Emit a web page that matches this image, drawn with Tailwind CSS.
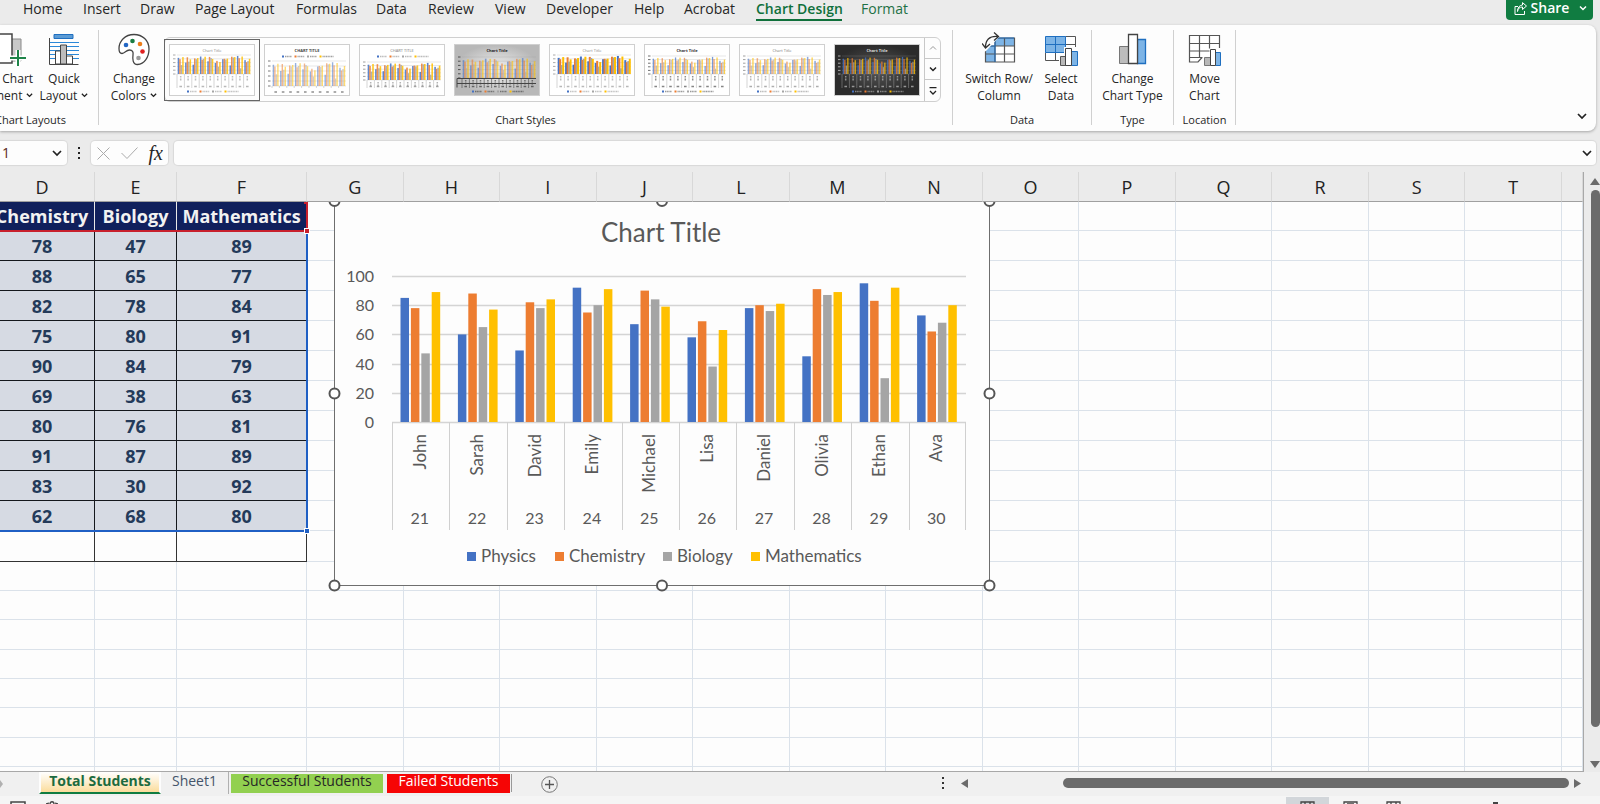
<!DOCTYPE html>
<html lang="en">
<head>
  <meta charset="UTF-8">
  <meta name="viewport" content="width=device-width,initial-scale=1">
  <title>Total Students – Chart Design</title>
  <script src="https://cdn.jsdelivr.net/npm/@tailwindcss/browser@4"></script>
</head>
<body class="flex h-screen flex-col overflow-hidden bg-[#ebebeb] font-['Open_Sans',sans-serif] text-[#262626]">

<!-- ────────── TAB BAR ────────── -->
<header class="flex h-[25px] shrink-0 justify-between pl-[23px] pr-[7px]">
  <nav class="grid grid-cols-[60px_57px_55px_101px_80px_52px_67px_51px_88px_50px_72px_105px_60px] text-sm leading-[18px] whitespace-nowrap">
    <a href="#">Home</a>
    <a href="#">Insert</a>
    <a href="#">Draw</a>
    <a href="#">Page Layout</a>
    <a href="#">Formulas</a>
    <a href="#">Data</a>
    <a href="#">Review</a>
    <a href="#">View</a>
    <a href="#">Developer</a>
    <a href="#">Help</a>
    <a href="#">Acrobat</a>
    <a href="#" class="h-[21px] w-[86px] border-b-2 border-[#0f703b] font-semibold text-[#0f703b]">Chart Design</a>
    <a href="#" class="text-[#1e7145]">Format</a>
  </nav>
  <button class="flex h-5 w-[87px] items-center justify-between rounded-b bg-[#107c41] pb-1 pl-2 pr-1.5 text-sm font-semibold text-white">
    <svg class="size-[13px]" viewBox="0 0 13 13" fill="none" stroke="currentColor"><path d="M4 4.500H1v8h9.500V9M3.500 9.500c.3-3 2-4.500 5-4.500V7.500L12.500 4 8.500 .6V3C5.500 3.200 3.600 5.500 3.500 9.500z"/></svg>
    <span>Share</span>
    <svg class="ml-1.5 size-2" viewBox="0 0 8 8" fill="none" stroke="currentColor" stroke-width="1.500"><path d="M1 2.500 4 5.500 7 2.500"/></svg>
  </button>
</header>

<!-- ────────── RIBBON ────────── -->
<section class="mr-1 flex h-[106px] shrink-0 overflow-hidden rounded-r-lg bg-[#fdfdfd] pt-[5px] pb-1.5 text-xs leading-[17px] shadow-[0_1px_3px_rgba(0,0,0,0.3)]">

  <!-- Chart Layouts -->
  <div class="flex w-[99px] flex-col border-r border-[#d0d0d0]">
    <div class="-ml-[30px] flex flex-1">
      <button class="flex w-[70px] shrink-0 flex-col items-center">
        <svg class="ml-[10px] mt-[3px] mb-1 h-[33px] w-[34px]" viewBox="0 0 34 33" fill="none">
          <path d="M10 6h18v22H10z" fill="#c8c8c8" stroke="#8a8a8a"/>
          <path d="M1 1h18v29H1z" fill="#fff" stroke="#444" stroke-width="1.500"/>
          <path d="M25 17v16M17 25h16" stroke="#fff" stroke-width="5"/>
          <path d="M25 17v16M17 25h16" stroke="#1e8449" stroke-width="2"/>
        </svg>
        <span>Add Chart</span>
        <span class="flex items-center gap-1">Element <svg class="size-[7px]" viewBox="0 0 8 8" fill="none" stroke="#222" stroke-width="1.500"><path d="M1 2 4 5 7 2"/></svg></span>
      </button>
      <button class="flex w-12 shrink-0 flex-col items-center">
        <svg class="mt-[3px] mb-1 h-[33px] w-8" viewBox="0 0 32 33" fill="none">
          <path d="M6 1.500h19v4H6z" fill="#5b9bd5" stroke="#1f6fc0"/>
          <path d="M2 9.500h29M2 13.500h29M2 17.500h29M2 21.500h29M2 25.500h29" stroke="#2b88d8" stroke-width="1.200"/>
          <path d="M7.500 18h5v13h-5zM18.500 23h6v8h-6z" fill="#fff" stroke="#444"/>
          <path d="M12.500 12h6v19h-6z" fill="#bcbcbc" stroke="#444"/>
          <path d="M1.500 5v26.500h29" stroke="#444"/>
        </svg>
        <span>Quick</span>
        <span class="flex items-center gap-1">Layout <svg class="size-[7px]" viewBox="0 0 8 8" fill="none" stroke="#222" stroke-width="1.500"><path d="M1 2 4 5 7 2"/></svg></span>
      </button>
    </div>
    <div class="-ml-[37px] text-center text-[11px] leading-[10px] whitespace-nowrap">Chart Layouts</div>
  </div>

  <!-- Chart Styles -->
  <div class="flex w-[854px] flex-col border-r border-[#d0d0d0]">
    <div class="flex flex-1 items-start pl-[10px]">
      <button class="flex w-[50px] shrink-0 flex-col items-center">
        <svg class="mt-[3px] mb-1 h-[33px] w-8" viewBox="0 0 32 33" fill="none">
          <path d="M16 1.500C7 1.500 1 8 1 15.500c0 3 1 5 3 5 3 0 4-3.500 7.500-3.500 3 0 4 2 3.500 5-.5 3.500-.5 9.500 4.500 9.500C26.500 31 31 24 31 16 31 7.500 24.500 1.500 16 1.500z" fill="#fff" stroke="#444" stroke-width="1.300"/>
          <circle cx="8" cy="12" r="2.300" fill="#2266c4"/><circle cx="14.500" cy="8" r="2.300" fill="#1a7d43"/>
          <circle cx="22" cy="11" r="2.300" fill="#ed7d1a"/><circle cx="24.500" cy="18.500" r="2.300" fill="#e02020"/><circle cx="20.500" cy="25" r="2.300" fill="#9a9a9a"/>
        </svg>
        <span>Change</span>
        <span class="flex items-center gap-1">Colors <svg class="size-[7px]" viewBox="0 0 8 8" fill="none" stroke="#222" stroke-width="1.500"><path d="M1 2 4 5 7 2"/></svg></span>
      </button>
      <div class="ml-[5px] mt-[7px] flex h-[65px] rounded-md border border-[#cfcfcf]">
        <div id="gallery" class="flex items-center gap-[9px] px-1"></div>
        <div class="grid w-4 grid-rows-3 divide-y divide-[#c8c8c8] border-l border-[#c8c8c8]">
          <button class="grid place-items-center" aria-label="Row up"><svg class="size-2" viewBox="0 0 8 8" fill="none" stroke="#999"><path d="M1 5.500 4 2.500 7 5.500"/></svg></button>
          <button class="grid place-items-center" aria-label="Row down"><svg class="size-2" viewBox="0 0 8 8" fill="none" stroke="#222" stroke-width="1.500"><path d="M1 2.500 4 5.500 7 2.500"/></svg></button>
          <button class="grid place-items-center" aria-label="More styles"><svg class="size-2" viewBox="0 0 8 8" fill="none" stroke="#222" stroke-width="1.300"><path d="M.5 .7h7M1 4 4 7 7 4"/></svg></button>
        </div>
      </div>
    </div>
    <div class="text-center text-[11px] leading-[10px]">Chart Styles</div>
  </div>

  <!-- Data -->
  <div class="flex w-[139px] flex-col border-r border-[#d0d0d0]">
    <div class="flex flex-1 pl-2">
      <button class="flex w-[76px] flex-col items-center">
        <svg class="mt-[1px] mb-1 h-[35px] w-[34px]" viewBox="0 0 34 35" fill="none">
          <path d="M3.500 7h29v24h-29z" fill="#fff"/>
          <path d="M13 7h19.500v8H13zM3.500 15H13v16H3.500z" fill="#7db4e6"/>
          <path d="M3.500 31V7h29v24zM3.500 15h29M3.500 23h29M13 7v24M22.500 7v24" stroke="#555" stroke-width="1.200"/>
          <path d="M13 15V7h19M3.500 15H13v16" stroke="#1f6fc0"/>
          <path d="M-1-1h19v6L4 20l-5 2z" fill="#fdfdfd"/>
          <path d="M3.500 16.500C3.500 9 7 5 15.500 5.500M12 1.500l4.500 4-4.500 4M0 12.500l3.500 4.500 4.500-4" stroke="#333" stroke-width="1.300"/>
        </svg>
        <span>Switch Row/</span>
        <span>Column</span>
      </button>
      <button class="flex w-12 flex-col items-center">
        <svg class="mt-[5px] mb-0.5 h-[33px] w-[34px]" viewBox="0 0 34 33" fill="none">
          <path d="M1.500 1.500h30v24h-30z" fill="#fff"/>
          <path d="M1.500 1.500h20v16h-20z" fill="#7db4e6"/>
          <path d="M21.500 1.500h10v24h-30v-8M21.500 9.500h10M21.500 17.500h10M11.500 17.500v8" stroke="#555"/>
          <path d="M1.500 1.500h20v16h-20zM1.500 9.500h20M11.500 1.500v16" stroke="#1f6fc0"/>
          <path d="M15 20h5v-8h14v21H15z" fill="#fdfdfd"/>
          <path d="M16.500 21.500h6v9h-6z" fill="#b8b8b8" stroke="#555"/>
          <path d="M27.500 16.500h6v14h-6z" fill="#7db4e6" stroke="#1f6fc0"/>
          <path d="M21.500 13.500h6v17h-6z" fill="#fff" stroke="#444"/>
        </svg>
        <span>Select</span>
        <span>Data</span>
      </button>
    </div>
    <div class="text-center text-[11px] leading-[10px]">Data</div>
  </div>

  <!-- Type -->
  <div class="flex w-[82px] flex-col border-r border-[#d0d0d0]">
    <button class="flex flex-1 flex-col items-center">
      <svg class="mt-[3px] mb-1 h-[33px] w-[30px]" viewBox="0 0 30 33" fill="none">
        <path d="M1.500 13.500h9v17h-9z" fill="#bcbcbc" stroke="#777"/>
        <path d="M19.500 6.500h8v24h-8z" fill="#7db4e6" stroke="#1f6fc0" stroke-width="1.300"/>
        <path d="M10.500 1.500h9v29h-9z" fill="#fff" stroke="#444" stroke-width="1.300"/>
      </svg>
      <span>Change</span>
      <span>Chart Type</span>
    </button>
    <div class="text-center text-[11px] leading-[10px]">Type</div>
  </div>

  <!-- Location -->
  <div class="flex w-[62px] flex-col border-r border-[#d0d0d0]">
    <button class="flex flex-1 flex-col items-center">
      <svg class="mt-[4px] mb-[3px] h-[33px] w-[34px]" viewBox="0 0 34 33" fill="none">
        <path d="M1.500 1.500h30v18l-20 4-3 4.500h-7z" fill="#fff"/>
        <path d="M31.500 14V1.500h-30V28H10l4-4.500M1.500 9.500h30M1.500 17h20M1.500 23.500h13M11.500 1.500v22M21.500 1.500v13" stroke="#555" stroke-width="1.200"/>
        <path d="M16.500 23.500h6v8h-6z" fill="#b8b8b8" stroke="#777"/>
        <path d="M27.500 18.500h5v13h-5z" fill="#7db4e6" stroke="#1f6fc0"/>
        <path d="M22.500 15.500h5v16h-5z" fill="#fff" stroke="#444"/>
      </svg>
      <span>Move</span>
      <span>Chart</span>
    </button>
    <div class="text-center text-[11px] leading-[10px]">Location</div>
  </div>

  <button class="mt-auto mb-1 ml-auto mr-[9px]" aria-label="Collapse ribbon"><svg class="size-[10px]" viewBox="0 0 10 10" fill="none" stroke="#222" stroke-width="1.700"><path d="M1 3 5 7 9 3"/></svg></button>
</section>

<!-- ────────── FORMULA BAR ────────── -->
<section class="flex h-[41px] shrink-0 items-start pt-[10px] pr-1">
  <div class="flex h-6 w-[67px] items-center justify-between rounded-r bg-[#fdfdfd] pr-[5px] shadow-[0_0_1px_1px_rgba(0,0,0,0.08)]">
    <input aria-label="Name box" value="1" class="w-10 pl-0.5 text-sm text-[#5a2a1a] outline-none">
    <svg class="size-[10px]" viewBox="0 0 10 10" fill="none" stroke="#222" stroke-width="1.700"><path d="M1 3 5 7 9 3"/></svg>
  </div>
  <div class="grid h-6 w-6 content-center justify-center gap-[3px]">
    <i class="size-[2px] bg-[#222]"></i><i class="size-[2px] bg-[#222]"></i><i class="size-[2px] bg-[#222]"></i>
  </div>
  <div class="flex h-6 w-[77px] items-center justify-between rounded bg-[#fdfdfd] pl-1.5 pr-[5px] shadow-[0_0_1px_1px_rgba(0,0,0,0.08)]">
    <button aria-label="Cancel"><svg class="size-[13px]" viewBox="0 0 13 13" stroke="#aaa"><path d="M.5.5l12 12M12.500.5l-12 12"/></svg></button>
    <button aria-label="Enter"><svg class="h-[12px] w-[17px]" viewBox="0 0 17 12" fill="none" stroke="#aaa"><path d="M.5 6l5.500 5.500L16.500.5"/></svg></button>
    <button class="font-['Liberation_Serif',serif] text-xl leading-5 italic">fx</button>
  </div>
  <div class="ml-[6px] flex h-6 flex-1 items-center rounded bg-[#fdfdfd] pr-[4px] shadow-[0_0_1px_1px_rgba(0,0,0,0.08)]">
    <input aria-label="Formula" class="flex-1 px-2 text-sm outline-none">
    <svg class="size-[10px]" viewBox="0 0 10 10" fill="none" stroke="#222" stroke-width="1.700"><path d="M1 3 5 7 9 3"/></svg>
  </div>
</section>

<!-- ────────── SHEET ────────── -->
<main class="flex min-h-0 flex-1">
  <div class="relative min-w-0 flex-1 overflow-hidden border-r border-b border-[#a8a8a8]">
    <div class="-ml-[10px]">
      <table class="w-full table-fixed border-separate border-spacing-0">
        <colgroup id="cols"></colgroup>
        <thead><tr id="letters"></tr></thead>
        <tbody id="rows" class="bg-[#fdfdfd]"></tbody>
      </table>
    </div>

    <!-- range outlines and the chart float over the cells -->
    <div class="pointer-events-none absolute inset-x-0 top-[30px] bottom-0 overflow-hidden">
      <div class="absolute -left-3 top-0 h-[30px] w-[320px] border-r-2 border-b-2 border-[#c8202c]"></div>
      <div class="absolute -left-3 top-[31px] h-[299px] w-[320px] border-r-2 border-b-2 border-[#1f5fc4]"></div>
      <i class="absolute left-[304px] top-0 h-0.5 w-1 bg-[#c8202c]"></i>
      <i class="absolute left-[304px] top-[26px] box-content size-[4px] border border-white bg-[#c8202c]"></i>
      <i class="absolute left-[304px] top-[326px] box-content size-[4px] border border-white bg-[#1f5fc4]"></i>
      <svg id="chart" class="absolute left-[327px] -top-[8px] h-[400px] w-[672px] font-[Lato,sans-serif]" viewBox="327 194 672 400" role="img" aria-label="Chart Title"></svg>
    </div>
  </div>

  <!-- vertical scrollbar -->
  <div class="flex w-4 flex-col items-end pt-[6px] pb-1">
    <svg class="h-[7px] w-[10px]" viewBox="0 0 10 7"><path d="M5 0l5 7H0z" fill="#6b6b6b"/></svg>
    <div class="mt-[5px] mb-[34px] w-[9px] flex-1 rounded-[5px] bg-[#6b6b6b]"></div>
    <svg class="h-[7px] w-[10px]" viewBox="0 0 10 7"><path d="M0 0h10L5 7z" fill="#6b6b6b"/></svg>
  </div>
</main>

<!-- ────────── SHEET TABS ────────── -->
<footer class="flex h-6 shrink-0 items-start bg-[#f0f0f0] text-sm leading-[17px] whitespace-nowrap">
  <svg class="mt-2 mr-9 h-2 w-[3px]" viewBox="0 0 3 8"><path d="M0 0l3 4-3 4z" fill="#b0b0b0"/></svg>
  <a href="#" class="h-[22px] w-[122px] border-x-2 border-b-2 border-[#fdfdfd] border-b-[#107c41] bg-linear-to-b from-white to-[#fbdc9a] text-center font-bold text-[#1c6b3f]">Total Students</a>
  <a href="#" class="h-[22px] w-[68px] border-r border-[#b0b0b0] text-center text-[#44546a]">Sheet1</a>
  <a href="#" class="ml-[2px] mt-0.5 h-[19px] w-[152px] bg-[#92d050] text-center leading-[14px]">Successful Students</a>
  <a href="#" class="ml-1 mt-0.5 h-[19px] w-[123px] bg-[#f60505] text-center leading-[14px] text-white">Failed Students</a>
  <i class="ml-px mt-0.5 h-[18px] w-px bg-[#999]"></i>
  <button class="mt-1 ml-[29px]" aria-label="New sheet"><svg class="size-[17px]" viewBox="0 0 17 17" fill="none" stroke="#777"><circle cx="8.500" cy="8.500" r="7.800"/><path d="M8.500 4v9M4 8.500h9" stroke="#555" stroke-width="1.300"/></svg></button>
  <div class="mt-[6px] mr-[19px] ml-auto flex h-[10px] items-center">
    <div class="mr-[17px] grid gap-[3px]"><i class="size-[2px] bg-[#333]"></i><i class="size-[2px] bg-[#333]"></i><i class="size-[2px] bg-[#333]"></i></div>
    <svg class="h-[9px] w-[7px]" viewBox="0 0 7 9"><path d="M7 0v9L0 4.500z" fill="#6b6b6b"/></svg>
    <div class="mr-[5px] ml-[95px] h-[10px] w-[506px] rounded-full bg-[#6b6b6b]"></div>
    <svg class="h-[9px] w-[7px]" viewBox="0 0 7 9"><path d="M0 0v9l7-4.500z" fill="#6b6b6b"/></svg>
  </div>
</footer>

<!-- ────────── STATUS BAR ────────── -->
<div class="flex h-2 shrink-0 items-end bg-[#f5f5f5] pl-[10px]">
  <svg class="h-[3px] w-4" viewBox="0 0 16 3" fill="none" stroke="#444" stroke-width="1.500"><path d="M1 3V1h14v2"/></svg>
  <svg class="ml-5 h-[3px] w-3" viewBox="0 0 12 3" fill="none" stroke="#444" stroke-width="1.300"><path d="M0 3l3-1M4 3c0-3 4-3 4 0M12 3L9 2"/></svg>
  <div class="ml-auto grid h-[7px] w-[43px] place-items-end justify-center bg-[#d2d6da]">
    <svg class="h-[3px] w-[15px]" viewBox="0 0 15 3" fill="none" stroke="#444" stroke-width="1.300"><path d="M1 3V1h13v2M5 1v2M10 1v2"/></svg>
  </div>
  <svg class="ml-[14px] h-[3px] w-[15px]" viewBox="0 0 15 3" fill="none" stroke="#444" stroke-width="1.300"><path d="M1 3V1h13v2M4 3h7"/></svg>
  <svg class="ml-7 h-[3px] w-[15px]" viewBox="0 0 15 3" fill="none" stroke="#444" stroke-width="1.300"><path d="M1 3V1h13v2M5 1v2M10 1v2"/></svg>
  <i class="mr-[102px] ml-[92px] h-[2px] w-[5px] bg-[#444]"></i>
</div>

<script>
/* ---------------- DATA ---------------- */
const students = [
  ["John",    21, 85, 78, 47, 89],
  ["Sarah",   22, 60, 88, 65, 77],
  ["David",   23, 49, 82, 78, 84],
  ["Emily",   24, 92, 75, 80, 91],
  ["Michael", 25, 67, 90, 84, 79],
  ["Lisa",    26, 58, 69, 38, 63],
  ["Daniel",  27, 78, 80, 76, 81],
  ["Olivia",  28, 45, 91, 87, 89],
  ["Ethan",   29, 95, 83, 30, 92],
  ["Ava",     30, 73, 62, 68, 80],
];
const colors = ["#4472c4", "#ed7d31", "#a5a5a5", "#ffc000"];

/* ---------------- GRID (column K is hidden) ---------------- */
const letters = [..."DEFGHIJLMNOPQRST", ""];
document.getElementById("cols").innerHTML =
  `<col class="w-[105px]"><col class="w-[82px]"><col class="w-[130px]">${"<col>".repeat(13)}<col class="w-[21px]">`;

document.getElementById("letters").innerHTML = letters.map(l =>
  `<th class="h-[30px] border-r border-b border-r-[#d8d8d8] border-b-[#a0a0a0] p-0 text-lg font-normal text-[#222]">${l}</th>`).join("");

const empty = `<td class="border-r border-b border-[#dbe2ea] p-0"></td>`;
const blank = empty.repeat(letters.length - 3);
const head = ["Chemistry", "Biology", "Mathematics"].map(t =>
  `<td class="border-r border-b border-[#e8e8e8] bg-[#10205c] p-0 text-center text-lg leading-5 font-bold text-[#f2f2f2]">${t}</td>`).join("");
let html = `<tr class="h-[29px]">${head}${blank}</tr>`;
students.forEach(s => {
  html += `<tr class="h-[30px]">` + s.slice(3).map(v =>
    `<td class="border-r border-b border-[#15171c] bg-[#d6dae3] p-0 text-center text-lg leading-5 font-bold text-[#243a5a]">${v}</td>`).join("") + blank + "</tr>";
});
html += `<tr class="h-[31px]">${`<td class="border-r border-b border-[#333] p-0"></td>`.repeat(3)}${blank}</tr>`;
for (let i = 0; i < 8; i++)
  html += `<tr class="${i % 3 === 2 ? "h-[30px]" : "h-[29px]"}">${empty.repeat(3)}${blank}</tr>`;
document.getElementById("rows").innerHTML = html;

/* ---------------- CHART ---------------- */
const X0 = 392, X1 = 966, Y0 = 422, H = 146, STEP = (X1 - X0) / 10;
let c = `<rect x="334.500" y="201.500" width="655" height="384" fill="#fdfdfd" stroke="#6e6e6e"/>
  <text x="661" y="242" text-anchor="middle" font-size="26" fill="#595959">Chart Title</text>`;
for (let v = 0; v <= 100; v += 20) {
  const y = Math.round(Y0 - v / 100 * H);
  c += `<path d="M${X0} ${y + .5}H${X1}" stroke="#d4d4d4" stroke-width="1.500"/>
        <text x="374" y="${y + 6}" text-anchor="end" font-size="16" fill="#595959">${v}</text>`;
}
students.forEach((s, i) => {
  const x = X0 + i * STEP, mid = x + STEP / 2;
  s.slice(2).forEach((v, k) => {
    const h = v / 100 * H;
    c += `<rect x="${x + 8.5 + k * 10.4}" y="${Y0 - h}" width="8.500" height="${h}" fill="${colors[k]}"/>`;
  });
  c += `<path d="M${Math.round(x) + .5} ${Y0}V530" stroke="#d0d0d0"/>
        <text transform="translate(${mid + 5} 434) rotate(-90)" text-anchor="end" font-size="17" fill="#595959">${s[0]}</text>
        <text x="${mid - 1}" y="524" text-anchor="middle" font-size="16" fill="#595959">${s[1]}</text>`;
});
c += `<path d="M${X1 - .5} ${Y0}V530" stroke="#d0d0d0"/>`;
[["Physics", 467], ["Chemistry", 555], ["Biology", 663], ["Mathematics", 751]].forEach(([t, x], k) => {
  c += `<rect x="${x}" y="552" width="9" height="9" fill="${colors[k]}"/>
        <text x="${x + 14}" y="562" font-size="17" fill="#595959">${t}</text>`;
});
[[334.5, 201], [662, 201], [989.5, 201], [334.5, 393.5], [989.5, 393.5], [334.5, 585.5], [662, 585.5], [989.5, 585.5]].forEach(([x, y]) => {
  c += `<circle cx="${x}" cy="${y}" r="5" fill="#fff" stroke="#555" stroke-width="2"/>`;
});
document.getElementById("chart").innerHTML = c;

/* ---------------- STYLE GALLERY ---------------- */
const styles = [
  { title: "Chart Title", ink: "#888", bg: "#fff",    top: 11, base: 30, fade: .85, w: 1.5 },
  { title: "CHART TITLE", ink: "#444", bg: "#fff",    top: 17, base: 42, fade: .55, w: 1.4, legendTop: true, bold: true },
  { title: "CHART TITLE", ink: "#777", bg: "#fff",    top: 18, base: 36, fade: .85, w: 1.6, legendTop: true },
  { title: "Chart Title", ink: "#222", bg: "url(#g)", top: 13, base: 34, fade: .6,  w: 1.6, bold: true, table: "#444" },
  { title: "Chart Title", ink: "#888", bg: "#fff",    top: 11, base: 30, fade: 1,   w: 2 },
  { title: "Chart Title", ink: "#333", bg: "#fff",    top: 12, base: 30, fade: .7,  w: 1.3, bold: true },
  { title: "Chart Title", ink: "#777", bg: "#fff",    top: 12, base: 30, fade: .6,  w: 1.5 },
  { title: "Chart Title", ink: "#ddd", bg: "url(#d)", top: 12, base: 30, fade: .8,  w: 1.3, bold: true, table: "#8a8a8a" },
];
document.getElementById("gallery").innerHTML = styles.map((t, n) => {
  let g = `<defs>
      <radialGradient id="g"><stop offset="0" stop-color="#f4f4f4"/><stop offset="1" stop-color="#b8b8b8"/></radialGradient>
      <radialGradient id="d"><stop offset="0" stop-color="#555"/><stop offset="1" stop-color="#2b2b2b"/></radialGradient>
    </defs><rect x=".5" y=".5" width="85" height="51" fill="${t.bg}" stroke="#cfcfcf"/>
    <text x="43" y="8" text-anchor="middle" font-size="4" font-weight="${t.bold ? 700 : 400}" fill="${t.ink}">${t.title}</text>`;
  for (let k = 0; k < 6; k++) {
    const y = t.base - k * (t.base - t.top) / 5;
    g += `<path d="M8 ${y}H82" stroke="#999" stroke-width=".4" opacity=".6"/><path d="M4 ${y}h2.500" stroke="${t.ink}" opacity=".7"/>`;
  }
  students.forEach((s, i) => {
    const x = 8 + i * 7.4;
    s.slice(2).forEach((v, k) => {
      const h = v / 100 * (t.base - t.top);
      g += `<rect x="${x + .7 + k * 1.5}" y="${t.base - h}" width="${t.w}" height="${h}" fill="${colors[k]}" opacity="${t.fade}"/>`;
    });
    g += `<path d="M${x} ${t.base}V44" stroke="${t.table || "#bbb"}" stroke-width=".6"/>
          <path d="M${x + 3.7} ${Math.min(t.base + 2, 44)}v${t.base < 40 ? 5 : 0}" stroke="${t.ink}" stroke-width="1.500" stroke-dasharray="1 .5" opacity=".55"/>
          <path d="M${x + 2.4} ${t.base > 40 ? 48 : 42.5}h2.600" stroke="${t.ink}" stroke-width="1.500" opacity=".6"/>`;
  });
  if (n === 3) g += `<path d="M3 34.500h79M3 39.500h79M3 34.500v9" stroke="#444"/>`;
  const ly = t.legendTop ? 12.5 : 47.5;
  colors.forEach((col, k) => {
    g += `<rect x="${18 + k * 12.5}" y="${ly - 1}" width="2" height="2" fill="${col}"/>
          <path d="M${21 + k * 12.5} ${ly}h${k === 3 ? 11 : 7}" stroke="${t.ink}" stroke-width="1.400" stroke-dasharray="1.200 .5" opacity=".5"/>`;
  });
  const pick = n === 0 ? "outline outline-[#666] outline-offset-4" : "";
  return `<button aria-label="Style ${n + 1}" class="${pick}"><svg class="h-[52px] w-[86px] font-['Open_Sans',sans-serif]" viewBox="0 0 86 52" fill="none">${g}</svg></button>`;
}).join("");
</script>
</body>
</html>
